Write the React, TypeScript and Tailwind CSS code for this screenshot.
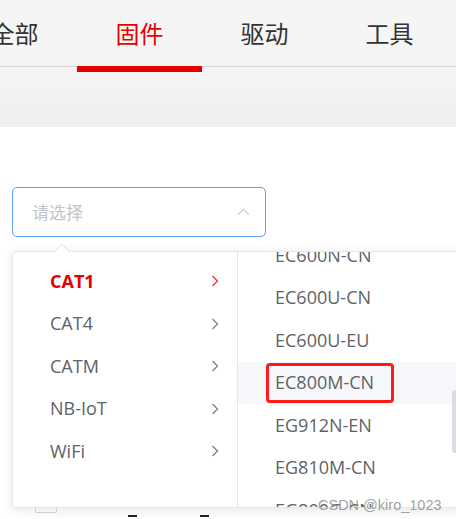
import React from 'react';

const tabs = ['全部', '固件', '驱动', '工具'];
const categories = ['CAT1', 'CAT4', 'CATM', 'NB-IoT', 'WiFi'];
const models = ['EC600N-CN', 'EC600U-CN', 'EC600U-EU', 'EC800M-CN', 'EG912N-EN', 'EG810M-CN', 'EG800G-CN'];

function Chevron({ className }: { className?: string }) {
  return (
    <svg viewBox="0 0 8 12" className={className} fill="none" stroke="currentColor" strokeWidth="1.2">
      <path d="M1.5 1l5 5-5 5" />
    </svg>
  );
}

export default function App() {
  return (
    <div className="relative w-[456px] h-[519px] overflow-hidden bg-white" style={{ fontFamily: '"Noto Sans CJK SC", "Noto Sans", sans-serif' }}>
      {/* Tabs */}
      <div className="bg-gradient-to-b from-[#f5f5f5] via-[#f5f5f5] to-[#efefef] h-[127px]">
        <div className="flex h-[66px] -ml-[48px]">
          {tabs.map((t, i) => (
            <div
              key={t}
              className={`relative w-[125px] shrink-0 flex items-center justify-center text-[24px] ${
                i === 1 ? 'text-[#e60000]' : 'text-[#333]'
              }`}
            >
              {t}
              {i === 1 && <div className="absolute left-0 right-0 top-[66px] h-[6px] bg-[#e60000] z-10" />}
            </div>
          ))}
        </div>
        <div className="h-px bg-[#d6d6d6]" />
      </div>

      {/* Select */}
      <div className="relative pt-[60px] pl-[12px]">
        <div className="w-[254px] h-[50px] border border-[#5f9ff7] rounded-[5px] flex items-center justify-between pl-[19px] pr-[15px]">
          <span className="text-[17px] text-[#c0c4cc]">请选择</span>
          <svg viewBox="0 0 14 8" className="w-[13px] h-[8px] text-[#c0c4cc]" fill="none" stroke="currentColor" strokeWidth="1.2">
            <path d="M1 7l6-6 6 6" />
          </svg>
        </div>

        {/* Cascader dropdown */}
        <div
          className="absolute left-[12px] top-[124px] w-[460px] h-[257px] bg-white border border-[#e4e7ed] rounded-[4px] shadow-[0_2px_12px_rgba(0,0,0,0.1)] flex"
          style={{ fontFamily: '"Open Sans", "Noto Sans", sans-serif' }}
        >
          <div className="absolute -top-[6px] left-[43px] w-[12px] h-[12px] bg-white border-l border-t border-[#e4e7ed] rotate-45" />
          <div className="w-[225px] shrink-0 border-r border-[#e4e7ed] pt-[8px]">
            {categories.map((c, i) => (
              <div
                key={c}
                className={`h-[42.5px] flex items-center justify-between pl-[37px] pr-[18px] text-[18px] ${
                  i === 0 ? 'text-[#e60000] font-bold' : 'text-[#606266]'
                }`}
              >
                <span>{c}</span>
                <Chevron className={`w-[8px] h-[12px] ${i === 0 ? 'text-[#f0282d]' : 'text-[#7a7a7a]'}`} />
              </div>
            ))}
          </div>
          <div className="relative flex-1 overflow-hidden">
            <div className="-mt-[18px]">
              {models.map((m) => (
                <div
                  key={m}
                  className={`h-[42.5px] flex items-center pl-[37px] text-[18px] text-[#606266] ${
                    m === 'EC800M-CN' ? 'bg-[#f5f7fa]' : ''
                  }`}
                >
                  {m}
                </div>
              ))}
            </div>
            <div className="absolute top-[138px] left-[214px] w-[6px] h-[63px] rounded-[3px] bg-[#dcdde0]" />
          </div>
        </div>

        {/* annotation box */}
        <div className="absolute left-[266px] top-[236px] w-[128px] h-[40px] border-[3px] border-[#ff1a1a] rounded-[4px]" />
      </div>

      {/* bits below the dropdown */}
      <div className="absolute left-[35px] top-[507px] w-[22px] h-[6px] border border-t-0 border-[#d0d0d0] rounded-b-[2px]" />
      <div className="absolute left-[128px] top-[515px] w-[9px] h-[2px] bg-[#222]" />
      <div className="absolute left-[200px] top-[515px] w-[9px] h-[2px] bg-[#222]" />

      {/* watermark */}
      <div className="absolute left-[318px] top-[495px] text-[14.5px] text-[#888]/80" style={{ fontFamily: '"Liberation Sans", sans-serif' }}>
        CSDN @kiro_1023
      </div>
    </div>
  );
}
